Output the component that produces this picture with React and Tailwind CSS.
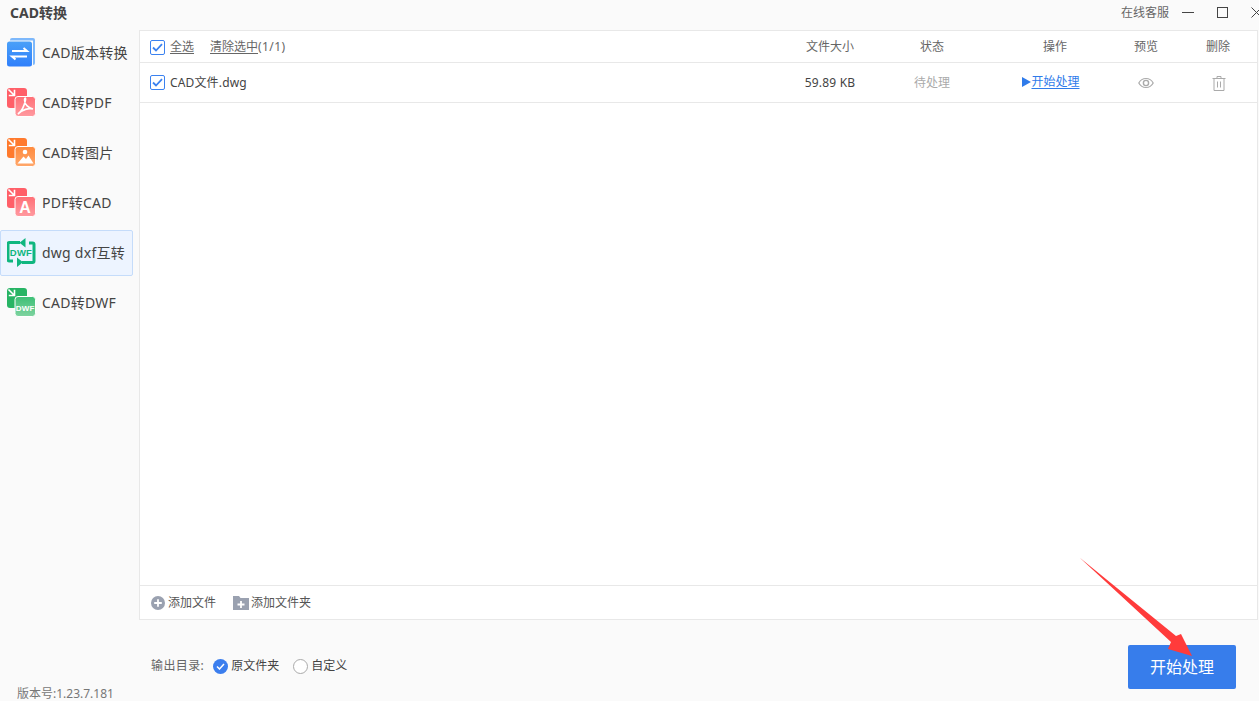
import React from 'react';

const FONT = "font-['Noto_Sans','Noto_Sans_CJK_SC',sans-serif]";

// two overlapping tiles with a corner arrow, used by most of the side menu
const StackIcon = ({ id, back, from, to, children }) => (
  <svg width="29" height="29" viewBox="0 0 29 29" className="shrink-0">
    <defs>
      <linearGradient id={id} x1="0" y1="0" x2="0" y2="1">
        <stop offset="0" stopColor={from} />
        <stop offset="1" stopColor={to} />
      </linearGradient>
    </defs>
    <rect x="0" y="0" width="20" height="20" rx="3" fill={back} />
    <path d="M1.5 1.5 L7 7 M7.5 1.8 V7.5 H1.8" stroke="#fff" strokeWidth="1.6" fill="none" />
    <rect x="8" y="8.5" width="20.5" height="20" rx="3" fill={`url(#${id})`} stroke="#fff" strokeWidth="1" />
    {children}
  </svg>
);

const ConvertIcon = () => (
  <svg width="29" height="29" viewBox="0 0 29 29" className="shrink-0">
    <defs>
      <linearGradient id="convert" x1="0" y1="0" x2="0" y2="1">
        <stop offset="0" stopColor="#4aa0f8" />
        <stop offset="1" stopColor="#2f7ffb" />
      </linearGradient>
    </defs>
    <path d="M3 2 a2 2 0 0 1 2 -2 H26 a2 2 0 0 1 2 2 V25 a2 2 0 0 1 -2 2 H26 V2.5 H3 Z" fill="#7db8fb" />
    <rect x="0" y="3.5" width="25" height="25" rx="2.5" fill="url(#convert)" />
    <path d="M5 13 H20 L16.5 10 M20 18.5 H5 L8.5 21.5" stroke="#fff" strokeWidth="2" fill="none" />
  </svg>
);

const PdfGlyph = () => (
  <path
    d="M11 26 C14 24 17 19 18.5 12 C19 9.5 17.5 9.5 17.5 12 C17.5 16 21 20 26 21 C22 19.8 15 21.5 11 26 Z"
    stroke="#fff"
    strokeWidth="1.6"
    fill="none"
  />
);

const ImageGlyph = () => (
  <g fill="#fff">
    <circle cx="18" cy="14" r="2.3" />
    <path d="M10.5 25.5 L16.5 18.5 L19 21 L21.5 17.5 L26.5 25.5 Z" />
  </g>
);

const SwapIcon = () => (
  <svg width="29" height="29" viewBox="0 0 29 29" className="shrink-0">
    <path d="M13 4.5 H2.5 a1.5 1.5 0 0 0 -1.5 1.5 V21.5 a1.5 1.5 0 0 0 1.5 1.5 H6" stroke="#0fb67f" strokeWidth="3" fill="none" />
    <path d="M15 24.5 H25.5 a1.5 1.5 0 0 0 1.5 -1.5 V6.5 a1.5 1.5 0 0 0 -1.5 -1.5 H22" stroke="#0fb67f" strokeWidth="3" fill="none" />
    <path d="M18.5 0 V9.5 L12.5 4.8 Z M10 19.5 V29 L16 24.2 Z" fill="#0fb67f" />
    <text x="14" y="18" textAnchor="middle" fontSize="9.5" fontWeight="700" fill="#0fb67f" fontFamily="Liberation Sans, sans-serif">DWF</text>
  </svg>
);

const tileText = (label, size) => (
  <text x="18.2" y={size > 10 ? 24.5 : 22.5} textAnchor="middle" fontSize={size} fontWeight="700" fill="#fff" fontFamily="Liberation Sans, sans-serif">{label}</text>
);

const menu = [
  { label: 'CAD版本转换', icon: <ConvertIcon /> },
  { label: 'CAD转PDF', icon: <StackIcon id="pdf" back="#ff5f68" from="#ff6f76" to="#ff9aa0"><PdfGlyph /></StackIcon> },
  { label: 'CAD转图片', icon: <StackIcon id="img" back="#ff7a2d" from="#ff8a3d" to="#ffa76b"><ImageGlyph /></StackIcon> },
  { label: 'PDF转CAD', icon: <StackIcon id="a" back="#ff5f68" from="#ff6f76" to="#ff9aa0">{tileText('A', 16)}</StackIcon> },
  { label: 'dwg dxf互转', icon: <SwapIcon />, active: true },
  { label: 'CAD转DWF', icon: <StackIcon id="dwf" back="#27b464" from="#3cbf75" to="#7fd3a0">{tileText('DWF', 8)}</StackIcon> },
];

const Check = () => (
  <span className="w-[15px] h-[15px] rounded-[2px] border border-[#3b82f0] bg-white flex items-center justify-center shrink-0">
    <svg width="11" height="9" viewBox="0 0 11 9">
      <path d="M1 4.5 L4 7.5 L10 1.2" stroke="#3b82f0" strokeWidth="1.8" fill="none" />
    </svg>
  </span>
);

const App = () => {
  return (
    <div className={`${FONT} relative w-[1259px] h-[701px] overflow-hidden bg-[#fafafa] text-[#444] flex flex-col`}>
      {/* Title bar */}
      <div className="h-[30px] shrink-0 flex items-center justify-between pl-[10px]">
        <span className="text-[14px] font-bold text-[#444] -mt-[5px]">CAD转换</span>
        <div className="flex items-center -mr-[3px] -mt-[5px]">
          <span className="text-[12px] text-[#666]">在线客服</span>
          <svg width="12" height="2" className="ml-[13px]"><rect width="12" height="1" fill="#444" /></svg>
          <svg width="11" height="11" className="ml-[23px]"><rect x="0.5" y="0.5" width="10" height="10" fill="none" stroke="#444" /></svg>
          <svg width="11" height="11" className="ml-[23px]"><path d="M0.5 0.5 L10.5 10.5 M10.5 0.5 L0.5 10.5" stroke="#444" /></svg>
        </div>
      </div>

      <div className="flex-1 flex min-h-0">
        {/* Side menu */}
        <div className="w-[139px] shrink-0 flex flex-col">
          <div className="flex flex-col gap-1 flex-1">
            {menu.map((item) => (
              <div
                key={item.label}
                className={`w-[133px] h-[46px] flex items-center gap-[6px] pl-[6px] pb-[2px] text-[14px] tracking-[0.25px] text-[#444] border rounded-[2px] ${item.active ? 'bg-[#edf4ff] border-[#c5dcfa]' : 'border-transparent'}`}
              >
                {item.icon}
                <span className="whitespace-nowrap">{item.label}</span>
              </div>
            ))}
          </div>
          <div className="pl-[17px] text-[12px] leading-[16px] text-[#777] -mb-[1px]">版本号:1.23.7.181</div>
        </div>

        {/* Main column */}
        <div className="flex-1 flex flex-col min-w-0">
          <div className="w-[1119px] h-[590px] bg-white border border-[#e8e8e8] flex flex-col">
            {/* Table header */}
            <div className="h-[32px] shrink-0 pt-[1px] border-b border-[#e8e8e8] grid grid-cols-[653px_74px_130px_116px_66px_78px] items-center text-[12px] text-[#666]">
              <div className="flex items-center pl-[10px]">
                <Check />
                <span className="ml-[5px] underline underline-offset-2">全选</span>
                <span className="ml-[16px]"><span className="underline underline-offset-2">清除选中</span><span className="tracking-[0.4px]">(1/1)</span></span>
              </div>
              <span className="text-center">文件大小</span>
              <span className="text-center">状态</span>
              <span className="text-center">操作</span>
              <span className="text-center">预览</span>
              <span className="text-center">删除</span>
            </div>
            {/* File row */}
            <div className="h-[40px] shrink-0 border-b border-[#e8e8e8] grid grid-cols-[653px_74px_130px_116px_66px_78px] items-center text-[12px]">
              <div className="flex items-center pl-[10px] text-[12px] tracking-[0.15px] text-[#444]">
                <Check />
                <span className="ml-[5px]">CAD文件.dwg</span>
              </div>
              <span className="text-center tracking-[0.2px] text-[#444]">59.89 KB</span>
              <span className="text-center text-[#aaa]">待处理</span>
              <span className="flex items-center justify-center pr-[8px] -mt-[1px] text-[#2f7bea]">
                <svg width="9" height="10" viewBox="0 0 9 10"><path d="M0 0 L9 5 L0 10 Z" fill="#2f7bea" /></svg>
                <span className="underline underline-offset-2">开始处理</span>
              </span>
              <span className="flex justify-center">
                <svg width="16" height="12" viewBox="0 0 16 12" fill="none" stroke="#aaa">
                  <path d="M0.8 6 C4 0 12 0 15.2 6 C12 12 4 12 0.8 6 Z" strokeWidth="1.2" />
                  <circle cx="8" cy="6" r="2.6" strokeWidth="1.4" />
                </svg>
              </span>
              <span className="flex justify-center pl-[2px] pt-[2px]">
                <svg width="14" height="15" viewBox="0 0 14 15" fill="none" stroke="#aaa">
                  <path d="M0.5 2.5 H13.5 M5 2.5 V0.5 H9 V2.5 M2 2.5 V14.5 H12 V2.5 M5.5 5.5 V11.5 M8.5 5.5 V11.5" />
                </svg>
              </span>
            </div>
            <div className="flex-1" />
            {/* Add buttons */}
            <div className="h-[34px] shrink-0 pt-[1px] border-t border-[#e8e8e8] flex items-center pl-[11px] text-[12px] text-[#555]">
              <svg width="14" height="14" viewBox="0 0 14 14">
                <circle cx="7" cy="7" r="7" fill="#9aa1b0" />
                <path d="M7 3.2 V10.8 M3.2 7 H10.8" stroke="#fff" strokeWidth="1.8" />
              </svg>
              <span className="ml-[3px]">添加文件</span>
              <svg width="16" height="14" viewBox="0 0 16 14" className="ml-[17px]">
                <path d="M0 0 H6 L7.5 2 H16 V14 H0 Z" fill="#9aa1b0" />
                <path d="M8 5 V12 M4.5 8.5 H11.5" stroke="#fff" strokeWidth="1.8" />
              </svg>
              <span className="ml-[2px]">添加文件夹</span>
            </div>
          </div>

          {/* Output options */}
          <div className="flex-1 flex items-start pr-[23px]">
            <div className="flex items-center h-[44px] mt-[24px] pl-[12px] text-[12px] text-[#444] flex-1">
              <span className="text-[#666] tracking-[0.4px]">输出目录:</span>
              <span className="ml-[9px] w-[15px] h-[15px] rounded-full bg-[#3b7eee] flex items-center justify-center">
                <svg width="9" height="7" viewBox="0 0 9 7"><path d="M1 3.5 L3.5 6 L8 1" stroke="#fff" strokeWidth="1.5" fill="none" /></svg>
              </span>
              <span className="ml-[3px]">原文件夹</span>
              <span className="ml-[14px] w-[15px] h-[15px] rounded-full border border-[#aaa] bg-white" />
              <span className="ml-[3px]">自定义</span>
            </div>
            <button className="mt-[25px] w-[108px] h-[44px] rounded-[2px] bg-[#377deb] text-white text-[16px]">开始处理</button>
          </div>
        </div>
      </div>

      {/* Red annotation arrow */}
      <svg className="absolute inset-0 pointer-events-none" width="1259" height="701">
        <polygon points="1079.5,557.5 1176,636 1181,634 1192,656 1168,649 1171,642" fill="#ff3b3b" />
      </svg>
    </div>
  );
};

export default App;
